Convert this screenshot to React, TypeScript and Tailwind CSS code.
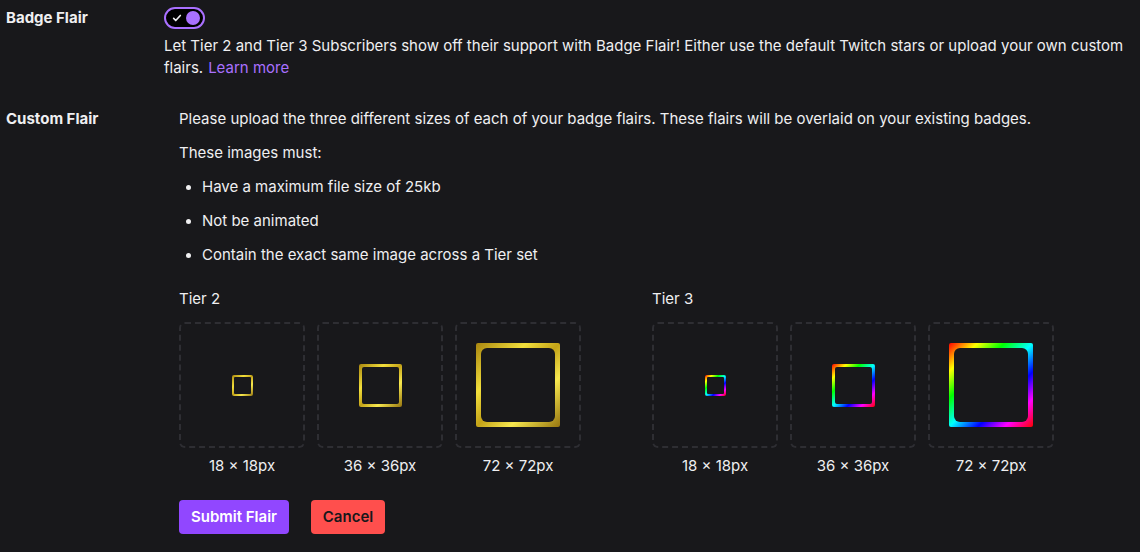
import type { ReactNode } from 'react'

const GOLD =
  'bg-[linear-gradient(135deg,#a8850f_0%,#f2df3c_30%,#c4a318_50%,#f7e84f_70%,#957410_100%)]'
const RAINBOW =
  'bg-[linear-gradient(135deg,#ff0000_0%,#ffff00_17%,#00ff00_33%,#00ffff_50%,#0000ff_67%,#ff00ff_83%,#ff0000_100%)]'

function Frame({ size, thick, radius, gradient }: { size: string; thick: string; radius: string; gradient: string }) {
  return (
    <div className={`${size} ${thick} ${gradient} rounded-[2px]`}>
      <div className={`size-full bg-[#18181b] ${radius}`} />
    </div>
  )
}

function Slot({ label, children }: { label: string; children: ReactNode }) {
  return (
    <div className="flex w-[126px] flex-col items-center gap-[7px]">
      <div className="flex size-[126px] items-center justify-center rounded-md border-2 border-dashed border-[#2e2e33]">
        {children}
      </div>
      <span className="leading-[22px]">{label}</span>
    </div>
  )
}

function TierGroup({ name, gradient }: { name: string; gradient: string }) {
  return (
    <div className="flex flex-col gap-[12px]">
      <span className="leading-[22px]">{name}</span>
      <div className="flex gap-[12px]">
        <Slot label="18 × 18px">
          <Frame size="size-[21px]" thick="p-[2px]" radius="rounded-[1px]" gradient={gradient} />
        </Slot>
        <Slot label="36 × 36px">
          <Frame size="size-[43px]" thick="p-[3px]" radius="rounded-[2px]" gradient={gradient} />
        </Slot>
        <Slot label="72 × 72px">
          <Frame size="size-[84px]" thick="p-[5px]" radius="rounded-[6px]" gradient={gradient} />
        </Slot>
      </div>
    </div>
  )
}

function Bullet({ children }: { children: ReactNode }) {
  return (
    <li className="flex items-center gap-[11px] pl-[7px] leading-[22px]">
      <span className="size-[5px] shrink-0 rounded-full bg-[#efeff1]" />
      {children}
    </li>
  )
}

export default function App() {
  return (
    <div className="h-[552px] overflow-hidden bg-[#18181b] px-[6px] font-['Inter',sans-serif] text-[15px] text-[#efeff1]">
      {/* Badge Flair */}
      <div className="flex">
        <div className="w-[158px] shrink-0 pt-[7px] font-bold leading-[22px]">Badge Flair</div>
        <div className="flex flex-col pt-[7px]">
          <div className="flex h-[22px] w-[41px] items-center justify-between rounded-full border-2 border-[#a970ff] bg-black pl-[6px] pr-[3px]">
            <svg viewBox="0 0 12 12" className="size-[10px]" fill="none" stroke="#efeff1" strokeWidth="2" strokeLinecap="round" strokeLinejoin="round">
              <path d="M2 6.5l2.5 2.5L10 3" />
            </svg>
            <span className="size-[14px] rounded-full bg-[#a970ff]" />
          </div>
          <div className="mt-[6px] flex flex-col leading-[22px]">
            <span>
              Let Tier 2 and Tier 3 Subscribers show off their support with Badge Flair! Either use the default Twitch stars or upload your own custom
            </span>
            <div className="flex gap-[5px]">
              <span>flairs.</span>
              <a href="#" className="text-[#a970ff]">
                Learn more
              </a>
            </div>
          </div>
        </div>
      </div>

      {/* Custom Flair */}
      <div className="mt-[29px] flex">
        <div className="w-[158px] shrink-0 font-bold leading-[22px]">Custom Flair</div>
        <div className="flex flex-col pl-[15px]">
          <p className="leading-[22px]">
            Please upload the three different sizes of each of your badge flairs. These flairs will be overlaid on your existing badges.
          </p>
          <p className="mt-[12px] leading-[22px]">These images must:</p>
          <ul className="mt-[12px] flex flex-col gap-[12px]">
            <Bullet>Have a maximum file size of 25kb</Bullet>
            <Bullet>Not be animated</Bullet>
            <Bullet>Contain the exact same image across a Tier set</Bullet>
          </ul>
          <div className="mt-[22px] flex gap-[71px]">
            <TierGroup name="Tier 2" gradient={GOLD} />
            <TierGroup name="Tier 3" gradient={RAINBOW} />
          </div>
          <div className="mt-[23px] flex gap-[22px]">
            <button type="button" className="h-[34px] w-[110px] rounded-[4px] bg-[#9147ff] font-semibold text-white">
              Submit Flair
            </button>
            <button type="button" className="h-[34px] w-[74px] rounded-[4px] bg-[#ff4f4d] font-semibold text-[#18181b]">
              Cancel
            </button>
          </div>
        </div>
      </div>
    </div>
  )
}
